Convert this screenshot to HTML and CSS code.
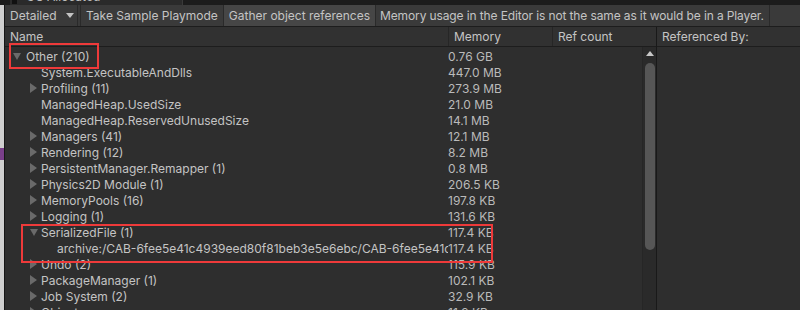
FILE: index.html
```html
<html>
<head>
    <title>Memory Profiler</title>
    <meta charset="UTF-8">
    <link rel="stylesheet" href="styles.css">
</head>
<body>
    <div class="top-strip">
        <div class="gc-box"><span class="gc-check"></span><span class="gc-text">GC Allocated</span></div>
    </div>
    <div class="main">
        <div class="edge"><span class="edge-mark"></span></div>
        <div class="window">
            <!-- Toolbar -->
            <div class="toolbar">
                <div class="tb-dropdown">Detailed <span class="tb-caret"></span></div>
                <div class="tb-button">Take Sample Playmode</div>
                <div class="tb-button active">Gather object references</div>
                <div class="tb-label">Memory usage in the Editor is not the same as it would be in a Player.</div>
                <div class="tb-fill"></div>
            </div>

            <div class="panes">
                <!-- Tree view -->
                <div class="tree-pane">
                    <div class="tree-header">
                        <div class="col-name">Name</div>
                        <div class="col-mem">Memory</div>
                        <div class="col-ref">Ref count</div>
                    </div>
                    <div class="tree-body">
                        <div class="rows" id="rows"></div>
                        <div class="scrollbar">
                            <span class="scroll-up"></span>
                            <div class="scroll-thumb"></div>
                        </div>
                    </div>
                </div>

                <!-- Referenced by -->
                <div class="refs-pane">
                    <div class="refs-header">Referenced By:</div>
                    <div class="refs-body"></div>
                </div>
            </div>
        </div>
    </div>

    <div class="mark mark-other"></div>
    <div class="mark mark-serialized"></div>

    <script>
        const items = [
            { name: 'Other (210)', mem: '0.76 GB', depth: 0, arrow: 'down' },
            { name: 'System.ExecutableAndDlls', mem: '447.0 MB', depth: 1 },
            { name: 'Profiling (11)', mem: '273.9 MB', depth: 1, arrow: 'right' },
            { name: 'ManagedHeap.UsedSize', mem: '21.0 MB', depth: 1 },
            { name: 'ManagedHeap.ReservedUnusedSize', mem: '14.1 MB', depth: 1 },
            { name: 'Managers (41)', mem: '12.1 MB', depth: 1, arrow: 'right' },
            { name: 'Rendering (12)', mem: '8.2 MB', depth: 1, arrow: 'right' },
            { name: 'PersistentManager.Remapper (1)', mem: '0.8 MB', depth: 1, arrow: 'right' },
            { name: 'Physics2D Module (1)', mem: '206.5 KB', depth: 1, arrow: 'right' },
            { name: 'MemoryPools (16)', mem: '197.8 KB', depth: 1, arrow: 'right' },
            { name: 'Logging (1)', mem: '131.6 KB', depth: 1, arrow: 'right' },
            { name: 'SerializedFile (1)', mem: '117.4 KB', depth: 1, arrow: 'down' },
            { name: 'archive:/CAB-6fee5e41c4939eed80f81beb3e5e6ebc/CAB-6fee5e41c4939eed80f81beb3e5e6ebc', mem: '117.4 KB', depth: 2 },
            { name: 'Undo (2)', mem: '115.9 KB', depth: 1, arrow: 'right' },
            { name: 'PackageManager (1)', mem: '102.1 KB', depth: 1, arrow: 'right' },
            { name: 'Job System (2)', mem: '32.9 KB', depth: 1, arrow: 'right' },
            { name: 'Objects', mem: '11.9 KB', depth: 1, arrow: 'right' }
        ];

        const rows = document.getElementById('rows');
        rows.innerHTML = items.map(it => `
            <div class="row depth-${it.depth}">
                <div class="row-name">
                    <span class="arrow ${it.arrow || ''}"></span>${it.name}
                </div>
                <div class="row-mem">${it.mem}</div>
            </div>
        `).join('');
    </script>
</body>
</html>
```

FILE: styles.css
```css
:root {
    --text: #c4c4c4;
    --text-dim: #bababa;
    --arrow: #6a6a6a;
    --toolbar: #3a3a3a;
    --line: #1d1d1d;
    --list: #2e2e2e;
    --header: #313131;
    --mark: #ee3a3a;
}

body {
    margin: 0;
    width: 800px;
    height: 310px;
    overflow: hidden;
    background: #1e1e1e;
    font-family: 'Inter', 'Noto Sans', sans-serif;
    font-size: 12px;
    color: var(--text);
    display: flex;
    flex-direction: column;
}

.top-strip {
    height: 5px;
    background: #1c1c1c;
    overflow: hidden;
    display: flex;
}

.gc-box {
    margin-left: 10px;
    width: 173px;
    height: 5px;
    background: #2a2a2a;
    border-right: 1px solid #3a3a3a;
    display: flex;
    align-items: flex-start;
    overflow: hidden;
    padding-left: 2px;
    box-sizing: border-box;
    color: #bdbdbd;
}

.gc-check {
    width: 5px;
    height: 4px;
    background: #111;
    margin-right: 9px;
    flex-shrink: 0;
}

.gc-text {
    margin-top: -9px;
    line-height: 12px;
    white-space: nowrap;
}

.main {
    flex: 1;
    display: flex;
    min-height: 0;
}

.edge {
    width: 4px;
    background: #cfcfcf;
    border-right: 1px solid #161616;
    position: relative;
}

.edge-mark {
    position: absolute;
    left: 0;
    top: 143px;
    width: 4px;
    height: 12px;
    background: #7a3f8a;
}

.window {
    flex: 1;
    display: flex;
    flex-direction: column;
    min-width: 0;
}

/* Toolbar */
.toolbar {
    height: 21px;
    display: flex;
    background: var(--toolbar);
    border-bottom: 1px solid var(--line);
}

.toolbar > div {
    display: flex;
    align-items: center;
    white-space: nowrap;
    box-sizing: border-box;
}

.tb-dropdown {
    width: 73px;
    padding-left: 5px;
    border-right: 1px solid #2a2a2a;
}

.tb-caret {
    display: inline-block;
    width: 0;
    height: 0;
    border-left: 4px solid transparent;
    border-right: 4px solid transparent;
    border-top: 5px solid #c4c4c4;
    margin-left: 9px;
}

.tb-button {
    padding: 0 5px;
    border-left: 1px solid #2a2a2a;
    margin-left: 2px;
}

.tb-button + .tb-button {
    margin-left: 0;
}

.tb-button.active {
    background: #464646;
}

.tb-label {
    width: 395px;
    padding-left: 4px;
    letter-spacing: -0.12px;
    border-left: 1px solid #2a2a2a;
    border-right: 1px solid #2a2a2a;
}

.tb-fill {
    flex: 1;
}

/* Panes */
.panes {
    flex: 1;
    display: flex;
    min-height: 0;
}

.tree-pane {
    width: 651px;
    display: flex;
    flex-direction: column;
    border-right: 1px solid #191919;
}

.tree-header {
    height: 19px;
    display: flex;
    background: var(--header);
    border-bottom: 1px solid var(--line);
}

.tree-header > div {
    display: flex;
    align-items: center;
    box-sizing: border-box;
}

.col-name {
    width: 443px;
    padding-left: 5px;
}

.col-mem {
    width: 104px;
    padding-left: 5px;
    border-left: 1px solid #262626;
}

.col-ref {
    flex: 1;
    padding-left: 5px;
    border-left: 1px solid #262626;
}

.tree-body {
    flex: 1;
    display: flex;
    background: var(--list);
    min-height: 0;
}

.rows {
    flex: 1;
    overflow: hidden;
    padding-top: 1px;
}

.row {
    height: 16px;
    display: flex;
    align-items: center;
}

.row-name {
    width: 443px;
    box-sizing: border-box;
    flex-shrink: 0;
    white-space: nowrap;
    overflow: hidden;
    display: flex;
    align-items: center;
}

.depth-0 .row-name { padding-left: 3px; }
.depth-1 .row-name { padding-left: 18px; }
.depth-2 .row-name { padding-left: 50px; }

.arrow {
    display: inline-block;
    width: 18px;
    height: 10px;
    flex-shrink: 0;
    position: relative;
}

.arrow.right::before {
    content: '';
    position: absolute;
    left: 7px;
    top: 0;
    border-top: 5px solid transparent;
    border-bottom: 5px solid transparent;
    border-left: 7px solid var(--arrow);
}

.arrow.down::before {
    content: '';
    position: absolute;
    left: 5px;
    top: 2px;
    border-left: 4px solid transparent;
    border-right: 4px solid transparent;
    border-top: 7px solid var(--arrow);
}

.depth-1 .arrow.down::before {
    left: 7px;
}

.depth-2 .arrow {
    width: 2px;
}

.row-mem {
    color: var(--text-dim);
    white-space: nowrap;
}

.scrollbar {
    width: 13px;
    background: #2a2a2a;
    border-left: 1px solid #262626;
    display: flex;
    flex-direction: column;
    align-items: center;
}

.scroll-up {
    margin-top: 4px;
    border-left: 4px solid transparent;
    border-right: 4px solid transparent;
    border-bottom: 5px solid #c8c8c8;
}

.scroll-thumb {
    margin-top: 7px;
    width: 10px;
    height: 187px;
    border-radius: 5px;
    background: #565656;
}

.refs-pane {
    flex: 1;
    display: flex;
    flex-direction: column;
}

.refs-header {
    height: 19px;
    display: flex;
    align-items: center;
    padding-left: 5px;
    background: var(--header);
    border-bottom: 1px solid var(--line);
}

.refs-body {
    flex: 1;
    background: var(--list);
}

/* Annotation boxes drawn over the screenshot */
.mark {
    position: absolute;
    border: 2.5px solid var(--mark);
    box-sizing: border-box;
}

.mark-other {
    left: 9px;
    top: 43px;
    width: 90px;
    height: 26px;
}

.mark-serialized {
    left: 21px;
    top: 224px;
    width: 472px;
    height: 39px;
}
```
